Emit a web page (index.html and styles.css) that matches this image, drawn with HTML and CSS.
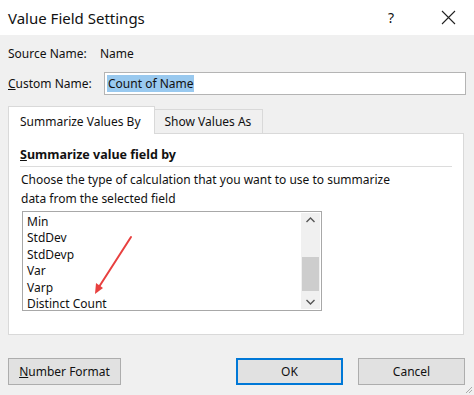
FILE: index.html
```html
<!DOCTYPE html>
<html lang="en">
<head>
    <meta charset="UTF-8">
    <title>Value Field Settings</title>
    <link rel="stylesheet" href="styles.css">
</head>
<body>
    <div class="dialog">
        <!-- Title bar -->
        <div class="titlebar">
            <span class="title">Value Field Settings</span>
            <span class="help">?</span>
            <span class="close">
                <svg width="15" height="15" viewBox="0 0 15 15"><path d="M1 1 L14 14 M14 1 L1 14" stroke="#222" stroke-width="1.1" fill="none"/></svg>
            </span>
        </div>

        <div class="content">
            <div class="row source">
                <span class="label">Source Name:</span>
                <span class="value">Name</span>
            </div>
            <div class="row custom">
                <span class="label"><u>C</u>ustom Name:</span>
                <div class="input"><span class="selected">Count of Name</span></div>
            </div>

            <!-- Tabs -->
            <div class="tabs">
                <div class="tab active">Summarize Values By</div>
                <div class="tab">Show Values As</div>
            </div>
            <div class="panel">
                <div class="heading"><u>S</u>ummarize value field by</div>
                <p class="desc">Choose the type of calculation that you want to use to summarize<br>data from the selected field</p>
                <div class="listbox">
                    <ul class="items">
                        <li>Min</li>
                        <li>StdDev</li>
                        <li>StdDevp</li>
                        <li>Var</li>
                        <li>Varp</li>
                        <li>Distinct Count</li>
                    </ul>
                    <div class="scrollbar">
                        <svg class="arrow" width="19" height="14" viewBox="0 0 19 14"><path d="M5.5 9 L9.5 5 L13.5 9" stroke="#555" stroke-width="1.4" fill="none"/></svg>
                        <div class="track"><div class="thumb"></div></div>
                        <svg class="arrow" width="19" height="14" viewBox="0 0 19 14"><path d="M5.5 5 L9.5 9 L13.5 5" stroke="#555" stroke-width="1.4" fill="none"/></svg>
                    </div>
                </div>
            </div>

            <div class="buttons">
                <button class="btn"><u>N</u>umber Format</button>
                <div class="spacer"></div>
                <button class="btn ok">OK</button>
                <button class="btn">Cancel</button>
            </div>
        </div>

        <!-- Red annotation arrow -->
        <svg class="annotation" width="474" height="395" viewBox="0 0 474 395">
            <path d="M131 237 L97 290" stroke="#e8403f" stroke-width="2" fill="none" stroke-linecap="round"/>
            <path d="M95 294 L96 283 L103 288 Z" fill="#e8403f"/>
        </svg>
        <svg class="grip" width="8" height="8" viewBox="0 0 8 8"><path d="M7 1 L1 7 M7 4 L4 7" stroke="#aaa" stroke-width="1"/></svg>
    </div>
</body>
</html>
```

FILE: styles.css
```css
body {
    margin: 0;
    font-family: 'Noto Sans', sans-serif;
    font-size: 12px;
    color: #111;
    background: #f0f0f0;
}

.dialog {
    position: relative;
    width: 474px;
    height: 395px;
    background: #f0f0f0;
    overflow: hidden;
}

.titlebar {
    height: 35px;
    background: #fff;
    display: flex;
    align-items: center;
    padding-left: 8px;
}

.title {
    font-size: 15px;
    flex: 1;
}

.help {
    font-size: 14px;
    width: 14px;
    margin-right: 39px;
}

.close {
    display: flex;
    margin-right: 18px;
}

.content {
    padding: 0 8px;
}

.row {
    display: flex;
    align-items: center;
}

.source {
    height: 18px;
    margin-top: 9px;
}

.source .label {
    width: 92px;
}

.custom {
    margin-top: 10px;
}

.custom .label {
    width: 96px;
}

.input {
    flex: 1;
    height: 21px;
    background: #fff;
    border: 1px solid #b4b4b4;
    display: flex;
    align-items: center;
    padding-left: 2px;
}

.selected {
    background: #99c9ef;
    padding: 1px 1px;
    line-height: 15px;
}

.tabs {
    display: flex;
    align-items: flex-end;
    margin-top: 12px;
    height: 26px;
    position: relative;
    z-index: 1;
}

.tab {
    height: 23px;
    line-height: 24px;
    padding: 0 11px 0 10px;
    background: #f0f0f0;
    border: 1px solid #d9d9d9;
    border-bottom: none;
    margin-left: 1px;
}

.tab.active {
    height: 27px;
    line-height: 29px;
    background: #fff;
    padding: 0 13px 0 11px;
    margin-left: 0;
    margin-bottom: -1px;
}

.tab.active + .tab {
    border-left: none;
    margin-left: 0;
}

.panel {
    width: 432px;
    height: 200px;
    background: #fff;
    border: 1px solid #d9d9d9;
    padding: 0 11px;
}

.heading {
    font-weight: bold;
    font-size: 12.5px;
    line-height: 19px;
    padding-top: 11px;
    padding-bottom: 2px;
    border-bottom: 1px solid #dcdcdc;
}

.desc {
    margin: 3px 0 0 1px;
    line-height: 19px;
}

.listbox {
    display: flex;
    width: 298px;
    height: 98px;
    margin: 3px 0 0 2px;
    border: 1px solid #a8a8a8;
    background: #fff;
}

.items {
    flex: 1;
    list-style: none;
    margin: 0;
    padding: 2px 0 0 4px;
}

.items li {
    height: 16.4px;
    line-height: 16px;
}

.scrollbar {
    width: 19px;
    margin: 1px 1px 1px 0;
    background: #f0f0f0;
    display: flex;
    flex-direction: column;
}

.arrow {
    display: block;
    flex: none;
}

.track {
    flex: 1;
    padding-top: 30px;
}

.thumb {
    height: 34px;
    margin: 0 1px;
    background: #cdcdcd;
}

.buttons {
    display: flex;
    margin-top: 23px;
    width: 457px;
}

.spacer {
    flex: 1;
}

.btn {
    font-family: inherit;
    font-size: 12px;
    color: #111;
    background: #e1e1e1;
    border: 1px solid #adadad;
    height: 27px;
    width: 107px;
    padding: 0;
}

.btn:first-child {
    width: 113px;
}

.btn.ok {
    border: 2px solid #0078d7;
    width: 107px;
    margin-right: 15px;
}

.annotation {
    position: absolute;
    left: 0;
    top: 0;
    pointer-events: none;
}

.grip {
    position: absolute;
    right: 1px;
    bottom: 1px;
}
```
